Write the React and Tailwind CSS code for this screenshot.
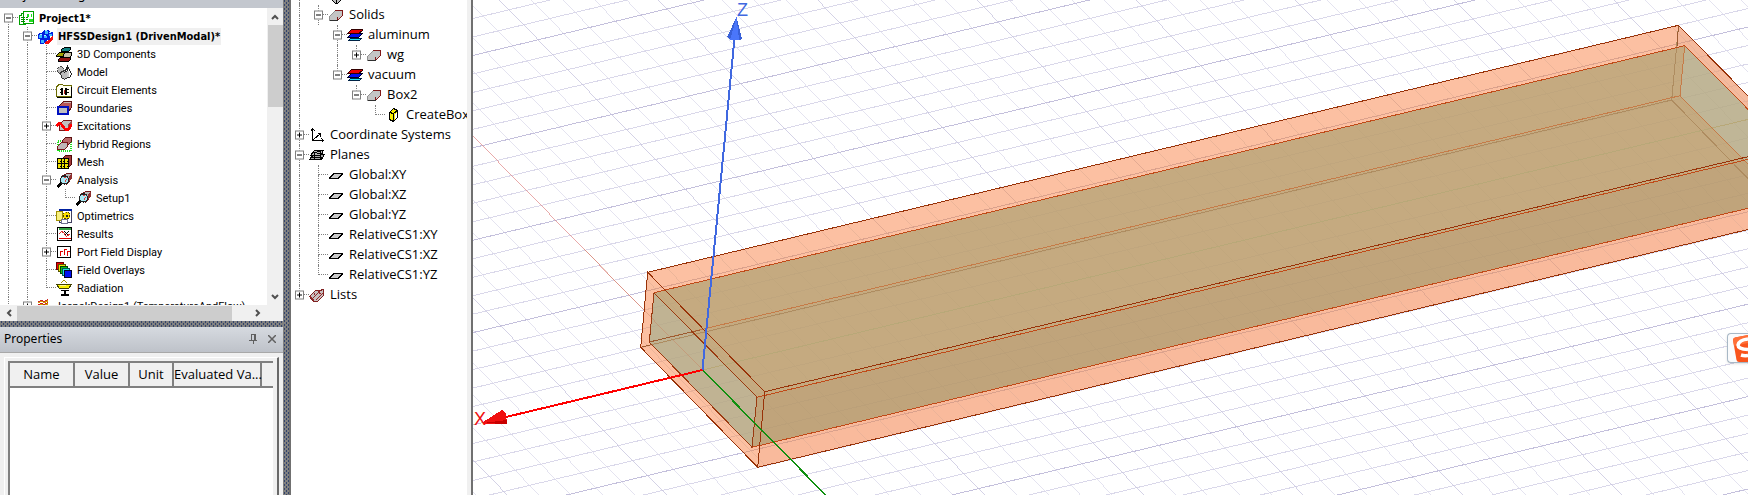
import React from "react";

/* ---------- pixel style icons, 16 x 16 ---------- */

const art = {
  project: (
    <>
      <path d="M3 3h4v11H1V5h2z" fill="#fff" stroke="#00a000" />
      <path d="M5 1h10v12H5z" fill="#fff" stroke="#00a000" />
      <path d="M2 7h4M2 9h4M2 11h4M7 7h2M7 9h2" stroke="#009000" fill="none" />
      <path d="M8 3h2v3H8zM12 3h1v3h-1zM10 8h4v3h-4z" fill="#20e020" />
    </>
  ),
  design: (
    <>
      <path d="M7 15h5l4-5V6l-4 5-6 3z" fill="#f01010" />
      <path d="M0 6l3-2h2l2-3h4l1 2h3v4l-3 1v3l-3 1-2 3H2v-4l-2-1z" fill="#0020e0" />
      <path d="M1 6h3v3H1zM7 2h3v3H7zM11 5h3v2h-3zM6 7h3v2H6zM3 11h3v3H3z" fill="#38b8ff" />
      <path d="M7 2h2M2 6h2M11 4h2M6 7h2" stroke="#b0f0ff" />
    </>
  ),
  components: (
    <>
      <path d="M5 3l3-2h6v2l-2 2H5z" fill="#108080" stroke="#000" />
      <path d="M0 9l3-3h5v4H0z" fill="#a0a000" stroke="#000" />
      <path d="M7 8l2-2h6v3l-2 2H7z" fill="#c8c0a8" stroke="#000" />
      <path d="M2 13l2-2h10v2l-2 2H2z" fill="#901010" stroke="#000" />
    </>
  ),
  model: (
    <>
      <path d="M1 4l2-2h2l2 2v3L5 9H3L1 7z" fill="#b8b8b8" stroke="#444" strokeDasharray="2 1" />
      <path d="M4 8l4-2 3 2v5l-3 2-3-2z" fill="#bcbcbc" stroke="#333" />
      <path d="M11 1l-3 8M11 1l4 9-2 3-2-1M11 1v11" fill="none" stroke="#222" />
      <path d="M10 6h2v6h-2z" fill="#ccc" />
    </>
  ),
  circuit: (
    <>
      <path d="M0 14V4l2-1V2h4l1 1h8v11z" fill="#fffff0" stroke="#6a6a00" />
      <path d="M0 15h15V4" fill="none" stroke="#000" />
      <path d="M5 6h1v6H5zM9 6h1v6H9z" fill="#000" stroke="#000" />
      <path d="M3 7h2M3 10h2M10 7h2M10 10h2" stroke="#000" />
      <path d="M7 7h1v4H7z" fill="#c02020" />
    </>
  ),
  boundaries: (
    <>
      <path d="M3 5l4-4h8v6l-4 5z" fill="#b85858" stroke="#5a1010" />
      <path d="M7 2h7" stroke="#c8b8b8" />
      <path d="M1 6h10v7H1z" fill="#c0c0c0" stroke="#0010c0" strokeWidth="2" />
    </>
  ),
  excitations: (
    <>
      <path d="M3 6l4-4h8v6l-4 4H3z" fill="#c0c0c0" stroke="#7a1818" />
      <path d="M11 6l4-4v6l-4 4z" fill="#a04848" />
      <path d="M0 8l2-3h2l5 6h3l3-5" fill="none" stroke="#f00" strokeWidth="2.500" />
    </>
  ),
  hybrid: (
    <>
      <path d="M1 4h13v10H1z" fill="none" stroke="#20e020" strokeDasharray="1 1" strokeWidth="2" />
      <path d="M6 4l3-3h6v4l-3 3H6z" fill="#b86868" stroke="#5a1010" />
      <path d="M1 10l4-4h6v4l-3 3H1z" fill="#c0b8b8" stroke="#7a1818" />
    </>
  ),
  mesh: (
    <>
      <path d="M6 4l3-3h6v9l-3 3z" fill="#a03838" stroke="#500808" />
      <path d="M1 4h11v10H1z" fill="#f0e000" stroke="#000" />
      <path d="M1 9h11M5 4v10M8 4v10" fill="none" stroke="#000" />
      <path d="M3 6h1v1H3zM6 6h1v1H6zM10 6h1v1h-1zM3 11h1v1H3zM6 11h1v1H6zM10 11h1v1h-1z" fill="#000" />
    </>
  ),
  analysis: (
    <>
      <path d="M5 4l5-3h5v5l-5 6z" fill="#b8b8b8" stroke="#701818" />
      <path d="M12 4l3-3v5l-3 3z" fill="#903030" />
      <path d="M1 14l4-3" stroke="#000" strokeWidth="3" />
      <circle cx="8" cy="7.5" r="4" fill="#a8e8f4" stroke="#222" strokeWidth="1.4" />
      <path d="M7 5h2M10 7l-2 3" stroke="#e04040" />
    </>
  ),
  optimetrics: (
    <>
      <path d="M3 1h12v13H3z" fill="#fff" stroke="#404060" />
      <path d="M2 1h13" stroke="#0020a0" strokeWidth="2" />
      <path d="M0 3h6v9H0z" fill="#f8f080" stroke="#a09000" />
      <path d="M5 11h6v4H5z" fill="#fff" stroke="#707090" />
      <circle cx="10" cy="7" r="3.5" fill="#f8e000" stroke="#504000" strokeDasharray="2 1" />
      <path d="M9 6h2v2H9z" fill="#202020" />
    </>
  ),
  results: (
    <>
      <path d="M1 1h14v13H1z" fill="#fff" stroke="#000" />
      <path d="M2 2h12" stroke="#30a040" strokeWidth="2" />
      <path d="M2 8l3-3 2 1 3 4 4-3" fill="none" stroke="#e03030" />
      <path d="M8 5l4 4M12 5l-4 4" stroke="#000" />
      <path d="M2 12h12" stroke="#e00000" />
    </>
  ),
  port: (
    <>
      <path d="M1 2h13v11H1z" fill="#fff" stroke="#000" />
      <path d="M4 11V6M8 10V4M11 11V6M3 7h3M7 5h3M10 7h3" fill="none" stroke="#e00000" />
    </>
  ),
  overlays: (
    <>
      <path d="M0 0h7v7H0z" fill="#f00000" stroke="#600" />
      <path d="M2 2h7v7H2z" fill="#f0e000" stroke="#550" />
      <path d="M4 4h7v7H4z" fill="#10c010" stroke="#040" />
      <path d="M6 6h7v7H6z" fill="#20e0e0" stroke="#055" />
      <path d="M8 8h7v7H8z" fill="#0010f0" stroke="#002" />
    </>
  ),
  radiation: (
    <>
      <path d="M0 4h15l-3 4H3z" fill="#f8f000" stroke="#404000" />
      <path d="M4 3l3-3h1l3 3" fill="none" stroke="#a09000" />
      <path d="M4 9h8v1H9v3h3v2H4v-2h3v-3H4z" fill="#000" />
      <path d="M3 5h6" stroke="#fff890" />
    </>
  ),
  icepak: (
    <>
      <path d="M1 3l3-1 3 1 4-2M1 6l3-1 3 1 4-2M1 9l3-1 3 1 4-2" fill="none" stroke="#d02020" />
      <path d="M1 4l3-1 3 1 4-2M1 7l3-1 3 1 4-2" fill="none" stroke="#d0a000" />
    </>
  ),
  root: (
    <>
      <path d="M4 8h8v3l-3 3H7l-3-3z" fill="#c0c0c0" stroke="#000" />
      <path d="M8 8v6" stroke="#000" />
    </>
  ),
  solid: (
    <>
      <path d="M1 9l6-6h7v5l-5 5H1z" fill="#c4c4c4" stroke="#909090" />
      <path d="M6 3h8v5l-5 5V9" fill="none" stroke="#801818" />
      <path d="M1 13h8" stroke="#303030" />
    </>
  ),
  material: (
    <>
      <path d="M1 13l2-2h11l-2 2H1z" fill="#20e8f8" stroke="#024" />
      <path d="M0 10l4-4h11l-4 4H0z" fill="#0010f0" stroke="#002" />
      <path d="M0 6l4-4h11v1l-4 3H0z" fill="#e80000" stroke="#300" />
    </>
  ),
  create: (
    <>
      <path d="M4 5l4-4 4 2v7l-4 4-4-2z" fill="#f8f000" stroke="#000" />
      <path d="M4 5l4 1 4-3M8 6v8" fill="none" stroke="#000" />
      <path d="M9 7l2-2v5l-2 2z" fill="#fff" />
    </>
  ),
  axes: (
    <>
      <path d="M3 1v12h11M4 12l7-6" fill="none" stroke="#000" />
      <path d="M1 4l2-3 3 3M12 11l2 2-2 2M8 6h3v3" fill="none" stroke="#000" />
    </>
  ),
  planes: (
    <>
      <path d="M0 12l4-5h11l-3 5z" fill="#a8a8a8" stroke="#000" />
      <path d="M1 8l4-5h9l-3 5z" fill="#b8b8b8" stroke="#000" />
      <path d="M5 12V5l6-1v8zM1 10h12M7 6h6" fill="none" stroke="#000" />
    </>
  ),
  plane: <path d="M1 11l4-5h9l-4 5z" fill="#c8c8c8" stroke="#000" strokeWidth="1.5" />,
  lists: (
    <>
      <path d="M0 9l6-6h4l4-1v6l-6 6H4z" fill="#c8c0c0" stroke="#802020" />
      <path d="M3 11l7-7M6 13l8-8M1 9l4 5M5 6l1 3M9 3l2 4" fill="none" stroke="#902828" />
    </>
  ),
};

function Icon({ name }) {
  return (
    <svg viewBox="0 0 16 16" className="h-4 w-4 shrink-0" shapeRendering="crispEdges" aria-hidden="true">
      <g transform="translate(.5 .5)">{art[name]}</g>
    </svg>
  );
}

/* ---------- tree ---------- */

/* guide letters: "I" line through, "T" branch, "L" last branch, "B" first, "-" stub, " " empty */
function Guide({ kind, first, toggle, label }) {
  const up = "ITL".includes(kind);
  const down = "ITB".includes(kind);
  const right = "TLB-".includes(kind);
  return (
    <div className="relative flex h-full shrink-0">
      <div className={`flex flex-col ${first ? "w-[9px]" : "w-[10px]"}`}>
        <div className={`flex-1 border-dotted border-[#808080] ${up ? "border-r" : ""}`} />
        <div className={`flex-1 border-dotted border-[#808080] ${down ? "border-r" : ""}`} />
      </div>
      <div className={`h-1/2 w-[9px] border-dotted border-[#808080] ${right ? "border-b" : ""}`} />
      {toggle && (
        <button
          type="button"
          aria-label={`${toggle === "+" ? "Expand" : "Collapse"} ${label}`}
          className={`absolute top-1/2 flex h-[9px] w-[9px] -translate-y-1/2 items-center justify-center border border-[#808080] bg-white ${first ? "left-1" : "left-[5px]"}`}
        >
          <span className="absolute h-px w-[5px] bg-black" />
          {toggle === "+" && <span className="absolute h-[5px] w-px bg-black" />}
        </button>
      )}
    </div>
  );
}

function Row({ row, rowClass, labelClass }) {
  const [guides, toggle, icon, label, style] = row;
  return (
    <li className={`flex shrink-0 items-center ${rowClass}`}>
      {guides.split("").map((g, i) => (
        <Guide key={i} kind={g} first={i === 0} toggle={i === guides.length - 1 ? toggle : ""} label={label} />
      ))}
      <Icon name={icon} />
      <span className={`whitespace-nowrap ${labelClass} ${style || ""}`}>{label}</span>
    </li>
  );
}

const boldLabel = "font-['DejaVu_Sans_Condensed','Noto_Sans',sans-serif] font-bold";

const projectRows = [
  ["B", "-", "project", "Project1*", boldLabel],
  ["IT", "-", "design", "HFSSDesign1 (DrivenModal)*", `${boldLabel} bg-[#f0f0f0]`],
  ["IIT", "", "components", "3D Components"],
  ["IIT", "", "model", "Model"],
  ["IIT", "", "circuit", "Circuit Elements"],
  ["IIT", "", "boundaries", "Boundaries"],
  ["IIT", "+", "excitations", "Excitations"],
  ["IIT", "", "hybrid", "Hybrid Regions"],
  ["IIT", "", "mesh", "Mesh"],
  ["IIT", "-", "analysis", "Analysis"],
  ["IIIL", "", "analysis", "Setup1"],
  ["IIT", "", "optimetrics", "Optimetrics"],
  ["IIT", "", "results", "Results"],
  ["IIT", "+", "port", "Port Field Display"],
  ["IIT", "", "overlays", "Field Overlays"],
  ["IIL", "", "radiation", "Radiation"],
  ["IT", "+", "icepak", "IcepakDesign1 (TemperatureAndFlow)"],
];

const modelRows = [
  ["IT", "-", "solid", "Solids"],
  ["I T", "-", "material", "aluminum"],
  ["I IL", "+", "solid", "wg"],
  ["I L", "-", "material", "vacuum"],
  ["I  L", "-", "solid", "Box2"],
  ["I   L", "", "create", "CreateBox"],
  ["T", "+", "axes", "Coordinate Systems"],
  ["T", "-", "planes", "Planes"],
  ["IT", "", "plane", "Global:XY"],
  ["IT", "", "plane", "Global:XZ"],
  ["IT", "", "plane", "Global:YZ"],
  ["IT", "", "plane", "RelativeCS1:XY"],
  ["IT", "", "plane", "RelativeCS1:XZ"],
  ["IL", "", "plane", "RelativeCS1:YZ"],
  ["L", "+", "lists", "Lists"],
];

/* ---------- scroll bars and splitters ---------- */

function Arrow({ d, label }) {
  return (
    <button type="button" aria-label={label} className="flex h-4 w-4 shrink-0 items-center justify-center">
      <svg viewBox="0 0 8 8" className="h-2 w-2" fill="none" stroke="#505050" strokeWidth="2">
        <path d={d} />
      </svg>
    </button>
  );
}

const weave =
  "bg-[#808080] bg-[image:conic-gradient(at_1px_2px,transparent_75%,#33446c_0),conic-gradient(at_1px_2px,transparent_75%,#33446c_0)] bg-[size:4px_4px] bg-[position:1px_0,3px_2px]";

/* ---------- properties ---------- */

const columns = [
  ["Name", "w-16"],
  ["Value", "w-[55px]"],
  ["Unit", "w-11"],
  ["Evaluated Va...", "w-[88px]"],
  ["", "w-3"],
];

function Properties() {
  return (
    <section className="flex min-h-0 flex-1 flex-col bg-[#f0f0f0]">
      <header className="flex h-[26px] shrink-0 items-center border-b border-[#a8a8a8] bg-linear-to-b from-[#d6dae0] to-[#bec2c9] pr-0.5 pb-0.5 pl-1">
        <h2 className="flex-1 font-['Noto_Sans',sans-serif] text-[12px] leading-4">Properties</h2>
        <button type="button" aria-label="Pin" className="flex h-4 w-[19px] items-center justify-center">
          <svg viewBox="0 0 9 10" className="h-[10px] w-[9px]" shapeRendering="crispEdges">
            <path d="M2 0h5v6H2zM3 1v5h2V1zM0 6h8v1H0zM4 7h1v3H4z" fill="#606060" fillRule="evenodd" />
          </svg>
        </button>
        <button type="button" aria-label="Close" className="flex h-4 w-[18px] items-center justify-center">
          <svg viewBox="0 0 8 8" className="h-2 w-2" stroke="#606060" strokeWidth="1.5">
            <path d="M0 0l8 8M8 0L0 8" />
          </svg>
        </button>
      </header>
      <div className="flex min-h-0 flex-1 pt-1 pr-1 pl-1">
        <div className="flex min-h-0 flex-1 border-t border-r-2 border-l border-t-white border-r-[#696969] border-l-white pt-[3px] pr-1 pl-[3px]">
          <div className="min-h-0 flex-1 overflow-hidden border-t-2 border-l-2 border-[#808080] bg-white">
            <table className="w-full table-fixed border-collapse font-['Open_Sans','Noto_Sans',sans-serif] text-[13px] leading-5">
              <thead>
                <tr className="h-6 bg-[#f0f0f0]">
                  {columns.map(([name, width], i) => (
                    <th
                      key={i}
                      scope="col"
                      className={`${width} border-r-2 border-b-2 border-[#808080] p-0 pb-0.5 font-normal whitespace-nowrap last:border-r-0`}
                    >
                      {name}
                    </th>
                  ))}
                </tr>
              </thead>
            </table>
          </div>
        </div>
      </div>
    </section>
  );
}

/* ---------- 3D view ---------- */

const SHALLOW = 0.2397;
const STEEP = 1.019;

function gridPaths() {
  const grid = { alongMinor: "", alongMajor: "", acrossMinor: "", acrossMajor: "" };
  for (let i = -22; i <= 60; i++) {
    const y = 425 + i * 18.48;
    grid[i % 5 === 0 ? "alongMajor" : "alongMinor"] += `M473 ${y}L1773 ${y - 1300 * SHALLOW}`;
  }
  for (let i = -16; i <= 46; i++) {
    if (i === 0) continue;
    const x = 340 + i * 31.84;
    grid[i % 5 === 0 ? "acrossMajor" : "acrossMinor"] += `M${x} 0L${x + 600 / STEEP} 600`;
  }
  return grid;
}

const grid = gridPaths();

/* the diagonal family is drawn thinner so that both families are one pixel wide along their rows */
function Grid({ minor, major }) {
  return (
    <>
      <path d={grid.alongMinor} stroke={minor} />
      <path d={grid.acrossMinor} stroke={minor} strokeWidth="0.72" />
      <path d={grid.alongMajor} stroke={major} />
      <path d={grid.acrossMajor} stroke={major} strokeWidth="0.72" />
    </>
  );
}

const hull = "M647.7 272.3L1678.5 25.3L1748 96V229.5L757.7 467.3L640.7 347.3z";
const inner = "M654 292.7L1684.7 45.7L1748 109.3V208.3L752 447.3L649.3 342z";

function Viewport() {
  return (
    <main className="relative min-w-0 flex-1 overflow-hidden bg-white">
      <svg
        viewBox="473 0 1275 495"
        preserveAspectRatio="xMinYMin slice"
        className="block h-full w-full"
        fill="none"
        shapeRendering="crispEdges"
        role="img"
        aria-label="Rectangular waveguide model on the XY grid"
      >
        <clipPath id="hull">
          <path d={hull} />
        </clipPath>
        <Grid minor="#dad8ea" major="#c4c0dc" />
        <path d="M473 136L702.5 370" stroke="#e08888" strokeWidth="0.72" />

        <path d={hull} fill="#fcc0a2" />
        <path d="M764.7 391.7L1748 156.7V229.5L757.7 467.3z" fill="#f9bb9d" />
        <path d="M1678.5 25.3L1748 96V178.7L1671.7 100z" fill="#f5bb9e" />
        <g clipPath="url(#hull)">
          <Grid minor="#efb49b" major="#e2a692" />
        </g>
        <path d={inner} fill="#c5aa81" />
        <path d="M757 397.3L1748 159.3V208.3L752 447.3z" fill="#c0a47b" />
        <path d="M654 292.7L757 397.3L752 447.3L649.3 342z" fill="#c0b394" />
        <path d="M1684.7 45.7L1748 109.3V164L1680 95.7z" fill="#c0b697" />
        <g clipPath="url(#hull)" opacity="0.07">
          <Grid minor="#807860" major="#706850" />
        </g>
        <path d="M584 249L702.5 370" stroke="#c87858" strokeWidth="0.72" opacity="0.55" />
        <path d="M702.5 370L1748 119.4" stroke="#b8a878" />

        {/* rear edges */}
        <path d="M640.7 347.3L1671.7 100L1748 178.7M1678.5 25.3L1671.7 100" stroke="#ae8c60" />
        <path d="M649.3 342L1680 95.7L1748 164M1684.7 45.7L1680 95.7" stroke="#c57b48" />
        <path d="M649.3 342L700 330M640.7 347.3L652 344.6M1678.5 25.3L1677 46" stroke="#9c5a30" />
        {/* inner box edges */}
        <path d="M654 292.7L1684.7 45.7L1748 109.3" stroke="#c04a18" />
        <path d="M757 397.3L1748 159.3M752 447.3L1748 208.3" stroke="#c04a18" />
        <path d="M654 292.7L757 397.3L752 447.3L649.3 342z" stroke="#9a3a10" />
        {/* outer box edges */}
        <path
          d="M647.7 272.3L1678.5 25.3L1748 96M764.7 391.7L1748 156.7M757.7 467.3L1748 229.5M647.7 272.3L764.7 391.7L757.7 467.3L640.7 347.3z"
          stroke="#983208"
        />

        {/* axes */}
        <path d="M702.5 370L825.7 495" stroke="#109010" strokeWidth="1.5" />
        <path d="M702.5 370L506 417" stroke="#f00" strokeWidth="2" />
        <path d="M483 422L502 410L506 413L507 424L484 424z" fill="#f01010" />
        <path d="M483 423L507 420V424z" fill="#c80000" />
        <path d="M702.5 370L734.5 38" stroke="#4068e0" strokeWidth="2" />
        <path d="M736.5 17L727 37L730 40H739L742 39z" fill="#4a76fa" />
        <path d="M736.5 17L727 37L730 40zM736.5 17L739 40L742 39z" fill="#3860d8" />
        <text x="737" y="16" fill="#4068e0" fontFamily="Liberation Sans, sans-serif" fontSize="18">
          Z
        </text>
        <text x="474" y="425" fill="#f01010" fontFamily="Liberation Sans, sans-serif" fontSize="18">
          X
        </text>
      </svg>
      <button
        type="button"
        aria-label="Input method"
        className="absolute top-[333px] right-0 h-[30px] w-[21px] overflow-hidden rounded-l-sm border border-r-0 border-[#a8b8c6] bg-[#fafbfc] shadow-sm"
      >
        <svg viewBox="0 0 20 28" className="h-7 w-5">
          <path d="M5 6Q5 4 7 3.500L20 1V28H11Q9 28 8.500 26z" fill="#f9541c" />
          <path d="M5 6Q5 4 7 3.500L20 1V9L6 12z" fill="#ff7038" />
          <path d="M20 5Q11 6 10 11Q10 15 20 15.500M13 21Q16 22 20 21.500" fill="none" stroke="#fff" strokeWidth="3.500" />
        </svg>
      </button>
    </main>
  );
}

export default function App() {
  return (
    <div className="flex h-screen w-full overflow-hidden bg-[#f0f0f0] text-black">
      <aside className="flex w-[283px] shrink-0 flex-col">
        <section className="flex h-[321px] shrink-0 flex-col">
          <header className="flex h-2 shrink-0 items-end overflow-hidden bg-[#c3c7ce] pl-1">
            <h2 className="font-['Noto_Sans',sans-serif] text-[12px] leading-[26px]">Project Manager</h2>
          </header>
          <div className="flex min-h-0 flex-1">
            <ul className="flex min-w-0 flex-1 flex-col overflow-hidden bg-white pt-px font-['Roboto','Noto_Sans',sans-serif] text-[11px]">
              {projectRows.map((row) => (
                <Row key={row[3]} row={row} rowClass="h-[18px]" labelClass="ml-1 px-px leading-[17px]" />
              ))}
            </ul>
            <div className="flex w-4 shrink-0 flex-col items-center justify-between pt-px">
              <Arrow d="M1 6l3-3 3 3" label="Scroll up" />
              <div className="mb-auto h-[82px] w-[15px] bg-[#cdcdcd]" />
              <Arrow d="M1 2l3 3 3-3" label="Scroll down" />
            </div>
          </div>
          <div className="flex h-4 shrink-0 items-center pr-[17px] pl-px">
            <Arrow d="M6 1L3 4l3 3" label="Scroll left" />
            <div className="mr-auto h-[15px] w-[215px] bg-[#cdcdcd]" />
            <Arrow d="M2 1l3 3-3 3" label="Scroll right" />
          </div>
        </section>
        <div className={`h-[6px] shrink-0 ${weave}`} />
        <Properties />
      </aside>
      <div className={`w-[6px] shrink-0 ${weave}`} />
      <nav className="flex w-[184px] shrink-0 border-r-2 border-l-2 border-[#707070] pr-1">
        <ul className="flex min-w-0 flex-1 flex-col overflow-hidden bg-white font-['Open_Sans','Noto_Sans',sans-serif] text-[13px]">
          <li className="flex h-[5px] shrink-0 items-end overflow-hidden">
            <Guide kind="I" first />
            <Guide kind=" " />
            <Icon name="root" />
          </li>
          {modelRows.map((row) => (
            <Row key={row[3]} row={row} rowClass="h-5" labelClass="ml-[5px] pb-0.5 leading-[18px]" />
          ))}
        </ul>
      </nav>
      <Viewport />
    </div>
  );
}
